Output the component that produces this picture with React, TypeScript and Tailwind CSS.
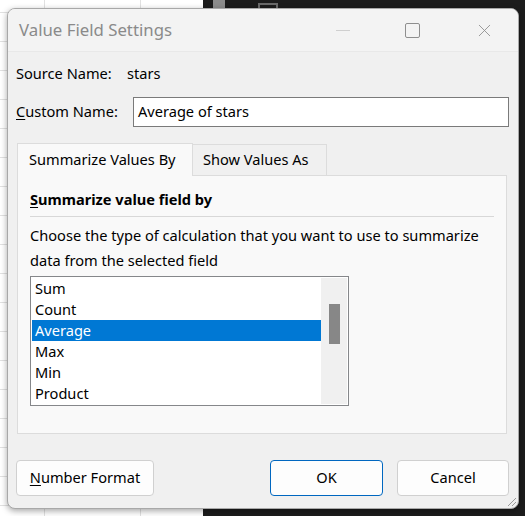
import { X } from 'lucide-react';

const items = ['Sum', 'Count', 'Average', 'Max', 'Min', 'Product'];

export default function App() {
  return (
    <div className="relative w-[525px] h-[516px] overflow-hidden font-['Noto_Sans',sans-serif] text-[14.6px] text-black">
      {/* backdrop: sheet on the left, dark window on the right */}
      <div className="flex h-full">
        <div className="w-[203px] h-full bg-white bg-[repeating-linear-gradient(to_bottom,transparent_0,transparent_12px,#e1e1e1_12px,#e1e1e1_13px,transparent_13px,transparent_29px)]">
          <div className="flex h-full">
            <div className="w-[45px] border-r border-[#e1e1e1]" />
            <div className="w-[96px] border-r border-[#e1e1e1]" />
          </div>
        </div>
        <div className="flex-1 h-full bg-[#1c1c1c]">
          <div className="flex h-[8px]">
            <div className="w-[10px]" />
            <div className="w-[12px] bg-[#8c8c8c]" />
            <div className="w-[33px]" />
            <div className="w-[20px] border-2 border-b-0 border-[#6a6a6a] mt-[3px]" />
          </div>
        </div>
      </div>

      {/* dialog */}
      <div className="absolute left-[7px] top-[8px] w-[512px] h-[501px] rounded-[8px] border border-[#a8a8a8] bg-[#f0f0f0] shadow-[0_2px_6px_rgba(0,0,0,0.35)] overflow-hidden flex flex-col">
        {/* title bar */}
        <div className="h-[43px] shrink-0 flex items-center bg-[#f3f3f3] border-b border-[#e8e8e8]">
          <span className="pl-[11px] text-[16.8px] text-[#8a8a8a]">Value Field Settings</span>
          <div className="ml-auto flex items-center h-full">
            <div className="w-[14px] h-px bg-[#cfcfcf] mr-[55px]" />
            <div className="w-[15px] h-[15px] border border-[#8e8e8e] rounded-[2px] mr-[54px]" />
            <X className="w-[21px] h-[21px] text-[#8e8e8e] mr-[23px]" strokeWidth={1} />
          </div>
        </div>

        {/* body */}
        <div className="flex-1 flex flex-col pl-[8px] pr-[9px]">
          <div className="flex items-center h-[22px] mt-[11px]">
            <span className="w-[111px]">Source Name:</span>
            <span>stars</span>
          </div>
          <div className="flex items-center mt-[12px] h-[30px]">
            <span className="w-[117px]">
              <span className="underline underline-offset-2">C</span>ustom Name:
            </span>
            <div className="w-[376px] h-[30px] bg-white border border-[#7a7a7a] flex items-center pl-[4px]">
              Average of stars
            </div>
          </div>

          {/* tabs */}
          <div className="flex items-end mt-[15px] ml-[1px] h-[33px]">
            <div className="w-[176px] h-[33px] bg-[#f9f9f9] border border-b-0 border-[#dcdcdc] flex items-center pl-[11px] relative z-10 -mb-px pb-[1px]">
              Summarize Values By
            </div>
            <div className="w-[134px] h-[31px] bg-[#f0f0f0] border border-l-0 border-b-0 border-[#dcdcdc] flex items-center pl-[10px]">
              Show Values As
            </div>
          </div>
          <div className="ml-[1px] w-[490px] h-[259px] bg-[#f9f9f9] border border-[#dcdcdc] px-[12px]">
            <div className="font-bold h-[41px] flex items-end pb-[5px] border-b border-[#d8d8d8]">
              <span>
                <span className="underline underline-offset-2">S</span>ummarize value field by
              </span>
            </div>
            <p className="leading-[25px] mt-[6px]">
              Choose the type of calculation that you want to use to summarize data from the selected field
            </p>
            <div className="mt-[3px] w-[319px] h-[130px] bg-white border border-[#85878a] flex p-px">
              <div className="flex-1 flex flex-col">
                {items.map(item => (
                  <div
                    key={item}
                    className={
                      item === 'Average'
                        ? 'h-[21px] flex items-center pl-[3px] bg-[#0078d4] text-white'
                        : 'h-[21px] flex items-center pl-[3px]'
                    }
                  >
                    {item}
                  </div>
                ))}
              </div>
              <div className="w-[26px] bg-[#f0f0f0] flex justify-center pt-[26px]">
                <div className="w-[11px] h-[40px] bg-[#878787] ml-[1px]" />
              </div>
            </div>
          </div>

          {/* buttons */}
          <div className="flex mt-[26px] h-[36px]">
            <button className="w-[138px] h-[36px] rounded-[4px] border border-[#d0d0d0] bg-[#fdfdfd]">
              <span className="underline underline-offset-2">N</span>umber Format
            </button>
            <button className="ml-auto w-[113px] h-[36px] rounded-[4px] border border-[#0067c0] bg-[#fdfdfd]">
              OK
            </button>
            <button className="ml-[14px] w-[112px] h-[36px] rounded-[4px] border border-[#d0d0d0] bg-[#fdfdfd]">
              Cancel
            </button>
          </div>
        </div>

        {/* resize grip */}
        <svg className="absolute right-[1px] bottom-[1px]" width="12" height="12" viewBox="0 0 12 12">
          <path d="M11 3 L3 11 M11 7 L7 11" stroke="#9a9a9a" strokeWidth="1" />
        </svg>
      </div>
    </div>
  );
}
